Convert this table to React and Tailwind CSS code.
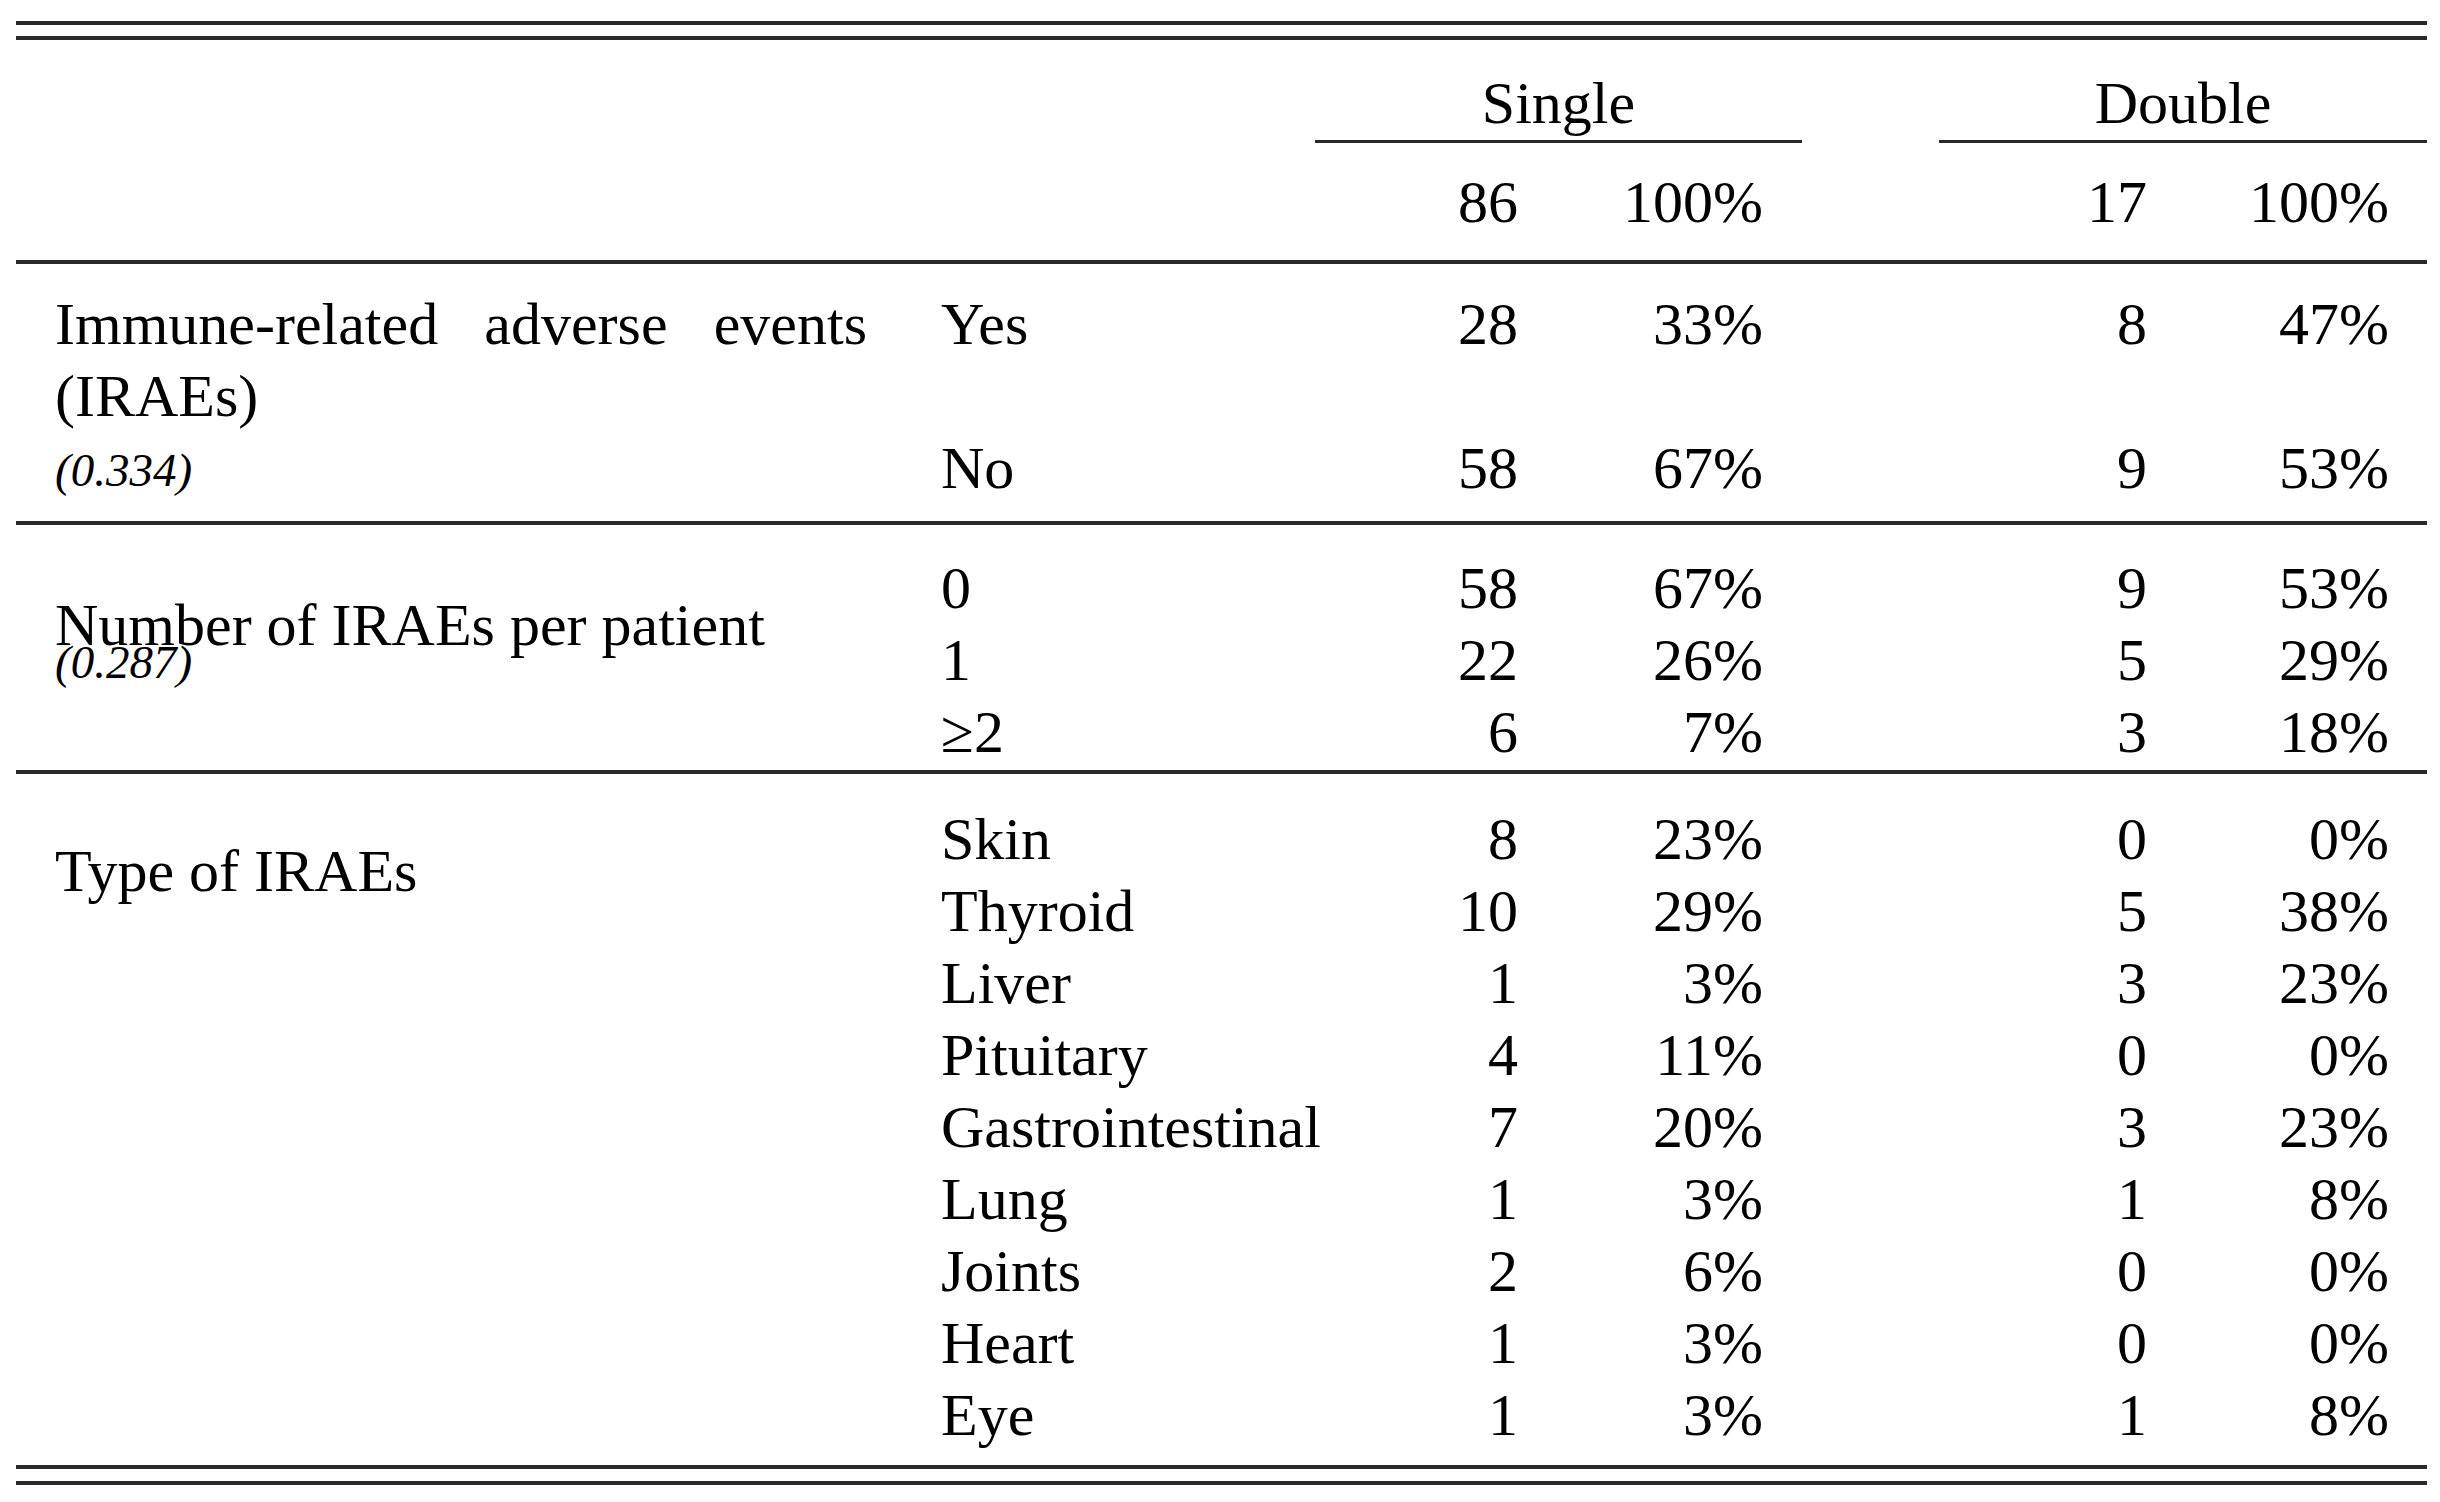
// Table: immune-related adverse events, single vs double regimen.
// Booktabs-style rules, serif type, numbers right-aligned.

const serif = "font-['Liberation_Serif','Times_New_Roman',serif]";

// widths of the columns to the right of the label column
const cols = 'grid grid-cols-[374px_203px_245px_384px_242px_38px]';

function Rule({ className = '' }) {
  return <div className={`h-[4px] w-full bg-[#2a2a2a] ${className}`} />;
}

function DataRow({ cat, n1, p1, n2, p2 }) {
  return (
    <div className={`${cols} h-[72px] leading-[72px]`}>
      <span>{cat}</span>
      <span className="text-right">{n1}</span>
      <span className="text-right">{p1}</span>
      <span className="text-right">{n2}</span>
      <span className="text-right">{p2}</span>
      <span />
    </div>
  );
}

const types = [
  ['Skin', '8', '23%', '0', '0%'],
  ['Thyroid', '10', '29%', '5', '38%'],
  ['Liver', '1', '3%', '3', '23%'],
  ['Pituitary', '4', '11%', '0', '0%'],
  ['Gastrointestinal', '7', '20%', '3', '23%'],
  ['Lung', '1', '3%', '1', '8%'],
  ['Joints', '2', '6%', '0', '0%'],
  ['Heart', '1', '3%', '0', '0%'],
  ['Eye', '1', '3%', '1', '8%'],
];

export default function App() {
  return (
    <div className={`min-h-[1502px] w-[2440px] bg-white ${serif} text-[60px] text-black`}>
      <div className="ml-[16px] w-[2411px] pt-[21px]">
        <Rule />
        <Rule className="mt-[11px]" />

        {/* group header */}
        <div className="mt-[27px] flex">
          <div className="w-[1299px]" />
          <div className="w-[487px]">
            <div className="h-[72px] text-center leading-[72px]">Single</div>
            <div className="mt-[1px] h-[3px] bg-[#2a2a2a]" />
          </div>
          <div className="w-[137px]" />
          <div className="w-[488px]">
            <div className="h-[72px] text-center leading-[72px]">Double</div>
            <div className="mt-[1px] h-[3px] bg-[#2a2a2a]" />
          </div>
        </div>

        <div className="mt-[23px] flex">
          <div className="w-[925px]" />
          <DataRow cat="" n1="86" p1="100%" n2="17" p2="100%" />
        </div>

        <Rule className="mt-[22px]" />

        {/* IRAEs yes / no */}
        <div className="mt-[24px] flex">
          <div className="w-[925px] pl-[39px]">
            <p className="w-[812px] text-justify leading-[72px]">
              Immune-related adverse events (IRAEs)
            </p>
            <p className="pt-[5px] text-[47px] italic leading-[67px]">(0.334)</p>
          </div>
          <div>
            <DataRow cat="Yes" n1="28" p1="33%" n2="8" p2="47%" />
            <div className="h-[72px]" />
            <DataRow cat="No" n1="58" p1="67%" n2="9" p2="53%" />
          </div>
        </div>

        <Rule className="mt-[17px]" />

        {/* number per patient */}
        <div className="mt-[27px] flex">
          <div className="w-[925px] pl-[39px] pt-[37px]">
            <p className="leading-[72px]">Number of IRAEs per patient</p>
            <p className="-mt-[21px] text-[47px] italic leading-[44px]">(0.287)</p>
          </div>
          <div>
            <DataRow cat="0" n1="58" p1="67%" n2="9" p2="53%" />
            <DataRow cat="1" n1="22" p1="26%" n2="5" p2="29%" />
            <DataRow cat="≥2" n1="6" p1="7%" n2="3" p2="18%" />
          </div>
        </div>

        <Rule className="mt-[2px]" />

        {/* type */}
        <div className="mt-[29px] flex">
          <div className="w-[925px] pl-[39px] pt-[32px]">
            <p className="leading-[72px]">Type of IRAEs</p>
          </div>
          <div>
            {types.map(([cat, n1, p1, n2, p2]) => (
              <DataRow key={cat} cat={cat} n1={n1} p1={p1} n2={n2} p2={p2} />
            ))}
          </div>
        </div>

        <Rule className="mt-[14px]" />
        <Rule className="mt-[12px]" />
      </div>
    </div>
  );
}
